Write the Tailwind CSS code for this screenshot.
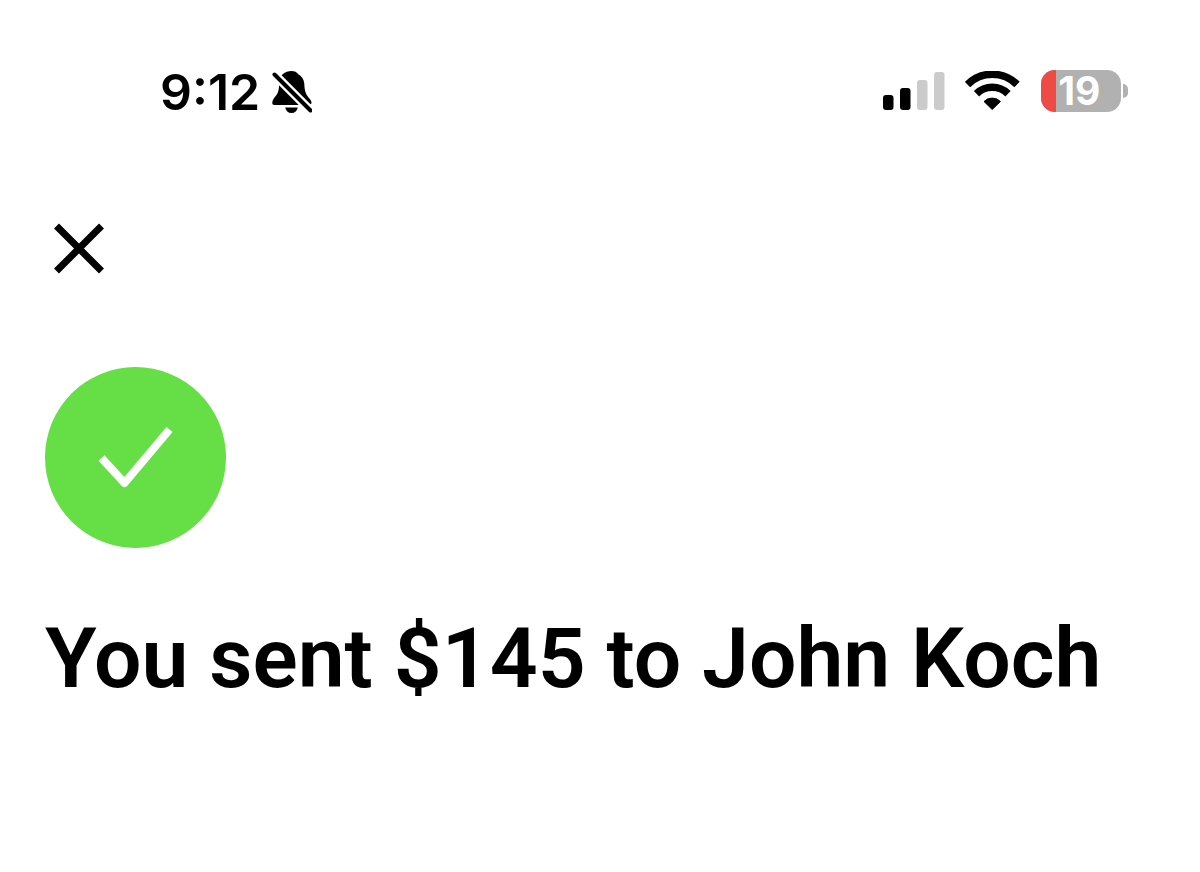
<!DOCTYPE html>
<html lang="en">
<head>
  <meta charset="UTF-8" />
  <meta name="viewport" content="width=device-width, initial-scale=1.0" />
  <title>Payment sent</title>
  <script src="https://cdn.jsdelivr.net/npm/@tailwindcss/browser@4"></script>
</head>
<body class="bg-white text-black min-h-screen font-['Inter',sans-serif]">
  <!-- status bar -->
  <header class="flex items-start justify-between pt-16 pl-40 pr-[72px]">
    <div class="flex items-center gap-3">
      <time class="text-[50px] leading-14 font-semibold">9:12</time>
      <svg class="w-10 h-11" viewBox="0 0 40 44" aria-label="Silent mode">
        <path d="M19.5 1C13 1 7.500 5 7.300 12C7 22 5.500 24 2.500 27.500C1 29.500 .3 31 .3 33C.3 34.200 1 35 2.300 35H36.500C38.500 35 39.500 34 39.500 32.500C39.500 30.500 38 29.500 36.500 27.500C33.500 24 32.500 20 32.300 14C32 8.500 29 6 26.500 4.500C25 2 22.500 1 19.500 1Z" />
        <path d="M13.200 37.500H25.800C25 41 23 43 19.500 43S14 41 13.200 37.500Z" />
        <path d="M-1 1L42 44" stroke="#fff" stroke-width="9" />
        <path d="M2.500 4.500L38.500 40.500" stroke="#000" stroke-width="4" stroke-linecap="round" />
      </svg>
    </div>
    <div class="flex items-center gap-5 pt-[6px]">
      <svg class="w-[62px] h-10" viewBox="0 0 62 40" aria-label="Signal">
        <rect x="0" y="24" width="10.500" height="15" rx="3" />
        <rect x="17" y="17" width="10.500" height="22" rx="3" />
        <rect x="34" y="9" width="10.500" height="30" rx="3" fill="#cbcbcb" />
        <rect x="51" y="1" width="10.500" height="38" rx="3" fill="#cbcbcb" />
      </svg>
      <svg class="w-[56px] h-10" viewBox="0 0 56 40" fill="none" stroke="#000" aria-label="Wi-Fi">
        <path d="M2.500 13.500A35 35 0 0 1 52 13.500" stroke-width="7.500" />
        <path d="M11.500 22.700A22.500 22.500 0 0 1 43 22.700" stroke-width="7.500" />
        <path d="M27.200 38.500L19 30.500A11.500 11.500 0 0 1 35.400 30.500Z" fill="#000" stroke-width="1" stroke-linejoin="round" />
      </svg>
      <div class="flex items-center gap-[2px]">
        <div class="flex w-20 h-[42px] rounded-[14px] bg-[#b1b1b1]">
          <div class="rounded-l-[14px] bg-[#ee4b45]" style="width: 19%"></div>
          <span class="pl-[2px] text-[39px] leading-[42px] font-bold text-white">19</span>
        </div>
        <div class="w-[5px] h-[14px] rounded-r-full bg-[#b1b1b1]"></div>
      </div>
    </div>
  </header>

  <main class="px-[45px] pt-[95px]">
    <button type="button" aria-label="Close" class="block w-[68px] h-[68px]">
      <svg class="w-full h-full" viewBox="0 0 68 68" fill="none" stroke="#000" stroke-width="7">
        <path d="M11.500 11L56.500 56M56.500 11L11.500 56" />
      </svg>
    </button>

    <div class="mt-[84px] flex size-[181px] rounded-full bg-[#66df46]">
      <svg class="w-full h-full" viewBox="0 0 181 181" fill="none" stroke="#fff" stroke-width="8" stroke-linejoin="round" aria-label="Success">
        <path d="M56.500 91L79.500 116L124.500 62.500" />
      </svg>
    </div>

    <h1 class="mt-[59px] font-['Roboto',sans-serif] text-[84px] leading-[104px] font-semibold">You sent $145 to John Koch</h1>
  </main>
</body>
</html>
